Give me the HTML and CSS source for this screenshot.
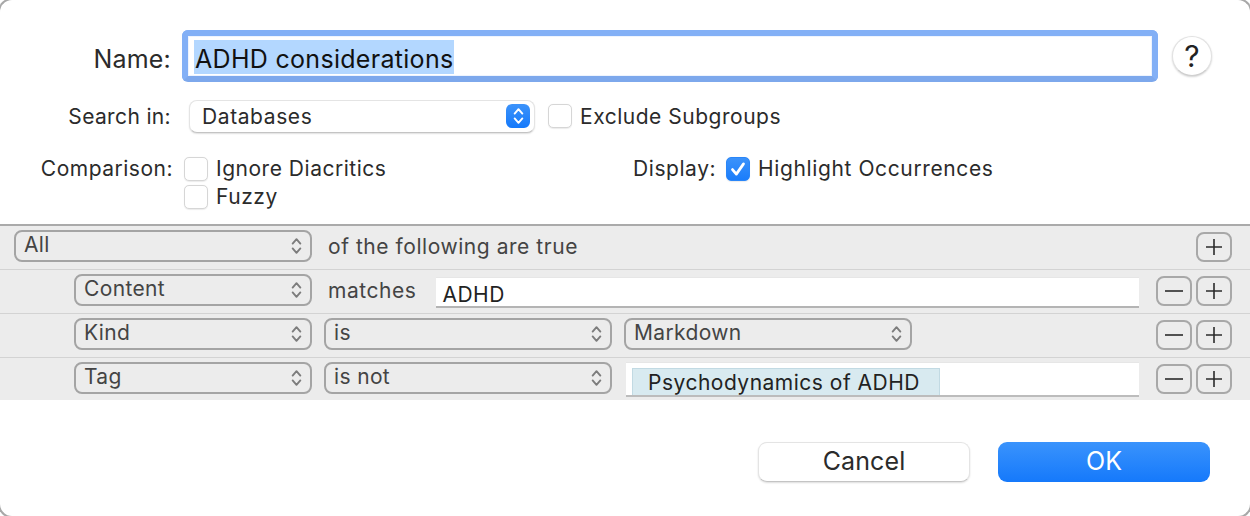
FILE: index.html
```html
<!DOCTYPE html>
<html lang="en">
<head>
<meta charset="utf-8">
<title>Smart Group</title>
<link rel="stylesheet" href="styles.css">
</head>
<body>
<svg width="0" height="0" class="defs">
  <symbol id="updown" viewBox="0 0 10 18"><path d="M1.5 6.8 5 2.8l3.5 4M1.5 11.2 5 15.2l3.5-4" fill="none" stroke="currentColor" stroke-width="1.7" stroke-linecap="round" stroke-linejoin="round"/></symbol>
  <symbol id="plus" viewBox="0 0 18 18"><path d="M1 9h16M9 1v16" fill="none" stroke="currentColor" stroke-width="1.6"/></symbol>
  <symbol id="minus" viewBox="0 0 18 18"><path d="M0 9h18" fill="none" stroke="currentColor" stroke-width="1.6"/></symbol>
</svg>
<main class="dialog">
  <div class="corner tl"></div><div class="corner tr"></div><div class="corner bl"></div><div class="corner br"></div>
  <section class="form">
    <div class="name-row">
      <label class="label name-label">Name:</label>
      <div class="name-field"><span class="selection">ADHD considerations</span></div>
      <button class="help">?</button>
    </div>
    <div class="search-row">
      <label class="label">Search in:</label>
      <div class="popup"><span>Databases</span>
        <span class="stepper"><svg class="stepper-icon"><use href="#updown"/></svg></span>
      </div>
      <span class="check"></span><span class="check-text">Exclude Subgroups</span>
    </div>
    <div class="options-row">
      <label class="label cmp-label">Comparison:</label>
      <div class="check-stack">
        <div class="check-line"><span class="check"></span><span class="check-text">Ignore Diacritics</span></div>
        <div class="check-line"><span class="check"></span><span class="check-text">Fuzzy</span></div>
      </div>
      <label class="display-label">Display:</label>
      <div class="check-line"><span class="check on"><svg viewBox="0 0 24 24" class="tick"><path d="M6 12.6l4.2 5L18 6.4" fill="none" stroke="#fff" stroke-width="3" stroke-linecap="round" stroke-linejoin="round"/></svg></span><span class="check-text wide">Highlight Occurrences</span></div>
    </div>
  </section>
  <section class="rules">
    <div class="rule">
      <div class="pop w-all">All<svg class="chev"><use href="#updown"/></svg></div>
      <span class="rule-text">of the following are true</span>
      <div class="actions">
        <button class="sq"><svg class="sign"><use href="#plus"/></svg></button>
      </div>
    </div>
    <div class="rule indented">
      <div class="pop w-key">Content<svg class="chev"><use href="#updown"/></svg></div>
      <span class="rule-text">matches</span>
      <div class="field">ADHD</div>
      <div class="actions">
        <button class="sq"><svg class="sign"><use href="#minus"/></svg></button>
        <button class="sq"><svg class="sign"><use href="#plus"/></svg></button>
      </div>
    </div>
    <div class="rule indented">
      <div class="pop w-key">Kind<svg class="chev"><use href="#updown"/></svg></div>
      <div class="pop w-op">is<svg class="chev"><use href="#updown"/></svg></div>
      <div class="pop w-op">Markdown<svg class="chev"><use href="#updown"/></svg></div>
      <div class="actions">
        <button class="sq"><svg class="sign"><use href="#minus"/></svg></button>
        <button class="sq"><svg class="sign"><use href="#plus"/></svg></button>
      </div>
    </div>
    <div class="rule indented last">
      <div class="pop w-key">Tag<svg class="chev"><use href="#updown"/></svg></div>
      <div class="pop w-op">is not<svg class="chev"><use href="#updown"/></svg></div>
      <div class="tagfield"><span class="token">Psychodynamics of ADHD</span></div>
      <div class="actions">
        <button class="sq"><svg class="sign"><use href="#minus"/></svg></button>
        <button class="sq"><svg class="sign"><use href="#plus"/></svg></button>
      </div>
    </div>
  </section>
  <footer class="footer">
    <button class="btn">Cancel</button>
    <button class="btn primary">OK</button>
  </footer>
</main>
</body>
</html>
```
FILE: styles.css
```css
* { box-sizing: border-box; }
html, body { margin: 0; padding: 0; background: #fff; }
.defs { position: absolute; }
body { font-family: Inter, "Liberation Sans", sans-serif; color: #2b2b2b; }
button { font-family: inherit; }
.dialog { position: relative; width: 1250px; height: 516px; overflow: hidden; background: #fff; }

.corner { position: absolute; width: 20px; height: 20px; border: 2px solid transparent; }
.corner.tl { left: -2px; top: -2px; border-top-left-radius: 14px; border-top-color: #a8a8a8; border-left-color: #a8a8a8; }
.corner.tr { right: -2px; top: -2px; border-top-right-radius: 14px; border-top-color: #a8a8a8; border-right-color: #a8a8a8; }
.corner.bl { left: -2px; bottom: -2px; border-bottom-left-radius: 14px; border-bottom-color: #a8a8a8; border-left-color: #a8a8a8; }
.corner.br { right: -2px; bottom: -2px; border-bottom-right-radius: 14px; border-bottom-color: #a8a8a8; border-right-color: #a8a8a8; }

.form { height: 224px; padding-top: 30px; }
.label { display: block; width: 171px; flex: none; text-align: right; font-size: 21px; letter-spacing: 0.35px; color: #2b2b2b; }

.name-row { display: flex; align-items: center; height: 52px; }
.name-label { font-size: 25px; letter-spacing: 0.2px; padding-top: 5px; }
.name-field { width: 976px; height: 52px; margin-left: 11px; padding: 4px 0 0 6px; background: #fff; border: 6px solid #83b0f6; border-bottom-color: #7da8ec; border-radius: 6px; box-shadow: inset 0 0 0 1px #eef4fe; }
.selection { display: block; width: 260px; height: 34px; padding-left: 1px; line-height: 39px; background: #b3d7ff; color: #111; font-size: 25px; letter-spacing: 0.3px; white-space: nowrap; }
.help { width: 40px; height: 40px; margin-left: 14px; padding: 0; background: #fff; border: 1px solid #e2e2e2; border-bottom-color: #cfcfcf; border-radius: 50%; box-shadow: 0 1px 2px rgba(0,0,0,.18); font-size: 30px; font-weight: 400; line-height: 36px; color: #222; }

.search-row { display: flex; align-items: center; height: 34px; margin-top: 17px; }
.popup { position: relative; display: flex; align-items: center; width: 346px; height: 33px; margin-left: 18px; margin-right: 13px; padding-left: 12px; background: #fff; border: 1px solid #e4e4e4; border-bottom-color: #c4c4c4; border-radius: 8px; box-shadow: 0 1px 1.5px rgba(0,0,0,.12); font-size: 21px; letter-spacing: 0.6px; }
.stepper { position: absolute; right: 4px; top: 3px; width: 24px; height: 24px; display: flex; align-items: center; justify-content: center; border-radius: 6px; background: linear-gradient(#3d93fa, #1479fb); color: #fff; }
.stepper-icon { width: 11px; height: 20px; }

.check { display: inline-block; flex: none; width: 24px; height: 24px; background: #fff; border: 1px solid #d6d6d6; border-radius: 5px; box-shadow: 0 .5px 1px rgba(0,0,0,.08); }
.check.on { background: linear-gradient(#3b92fa, #1a7dfb); border-color: #2a86f8; padding: 0; }
.tick { display: block; width: 22px; height: 22px; }
.check-text { margin-left: 8px; font-size: 21px; letter-spacing: 0.52px; white-space: nowrap; }
.check-text.wide { letter-spacing: 0.62px; }
.check-line .check-text { padding-bottom: 2px; }

.options-row { display: flex; align-items: flex-start; height: 56px; margin-top: 20px; padding-top: 4px; }
.cmp-label { width: 173px; line-height: 24px; letter-spacing: 0.5px; }
.check-stack { display: flex; flex-direction: column; gap: 4px; width: 436px; margin-left: 11px; margin-right: 13px; }
.check-line { display: flex; align-items: center; height: 24px; }
.display-label { width: 83px; margin-right: 10px; font-size: 21px; line-height: 24px; letter-spacing: 0.57px; white-space: nowrap; }

.rules { border-top: 2px solid #aaa; height: 176px; }
.rule { position: relative; display: flex; align-items: flex-start; height: 44px; padding: 4px 0 0 14px; background: #ececec; border-bottom: 1px solid #d3d3d3; gap: 12px; color: #444; font-size: 21px; }
.rule.indented { padding-left: 74px; }
.rule.last { border-bottom: 0; height: 42px; }
.pop { position: relative; flex: none; height: 32px; padding-left: 8px; line-height: 26px; background: #ececec; border: 2px solid #a4a4a4; border-radius: 8px; color: #444; font-size: 21px; letter-spacing: 0.35px; }
.w-all { width: 298px; }
.w-key { width: 238px; }
.w-op { width: 288px; }
.chev { position: absolute; right: 8px; top: 4px; width: 11px; height: 20px; color: #7c7c7c; }
.rule-text { margin-left: 4px; font-size: 21px; line-height: 34px; letter-spacing: 0.55px; white-space: nowrap; color: #444; }
.rule-text + .field { margin-left: 8px; }
.field { width: 703px; height: 31px; margin-top: 3px; padding-left: 6px; line-height: 34px; background: #fff; border-top: 1px solid #e6e6e6; border-bottom: 2px solid #b4b4b4; font-size: 21px; letter-spacing: 0.5px; color: #222; }
.tagfield { width: 513px; height: 35px; margin-left: 2px; padding: 5px 0 0 6px; overflow: hidden; background: #fff; border-top: 1px solid #e6e6e6; border-bottom: 2px solid #bcbcbc; }
.token { display: block; width: 308px; height: 27px; padding-left: 15px; line-height: 28px; background: #d8eaf0; border: 1px solid #c2dae3; border-bottom: 0; font-size: 21px; letter-spacing: 0.5px; color: #222; white-space: nowrap; }
.actions { position: absolute; right: 18px; top: 6px; display: flex; gap: 4px; }
.sq { display: flex; align-items: center; justify-content: center; width: 36px; height: 30px; padding: 0; background: #ececec; border: 2px solid #a8a8a8; border-radius: 8px; color: #2b2b2b; }
.sign { width: 18px; height: 18px; }

.footer { display: flex; justify-content: flex-end; gap: 28px; padding: 42px 40px 0 0; }
.btn { width: 212px; height: 40px; padding: 0 0 2px; background: #fff; border: 1px solid #e4e4e4; border-bottom-color: #c4c4c4; border-radius: 9px; box-shadow: 0 1px 2px rgba(0,0,0,.14); font-size: 25px; letter-spacing: .1px; color: #2b2b2b; }
.btn.primary { background: linear-gradient(#3a93fc, #1579fb); border: 0; box-shadow: none; color: #fff; }
```
